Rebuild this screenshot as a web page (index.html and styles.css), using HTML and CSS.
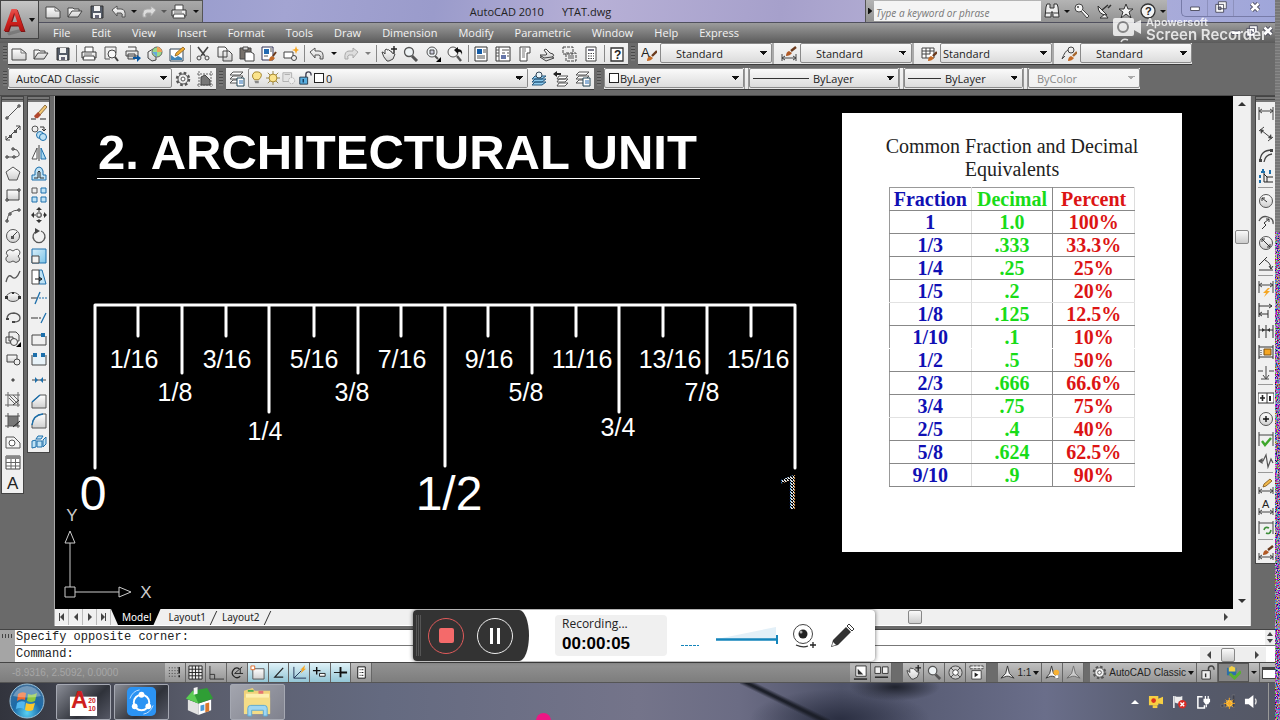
FILE: index.html
```html
<!DOCTYPE html>
<html lang="en">
<head>
<meta charset="UTF-8">
<meta name="viewport" content="width=device-width, initial-scale=1.0">
<title>AutoCAD 2010 - YTAT.dwg</title>
<link rel="stylesheet" href="styles.css">
</head>
<body>

<!-- Shared gradients -->
<svg class="gradients" aria-hidden="true">
  <defs>
    <linearGradient id="red" x1="0" y1="0" x2="0" y2="1"><stop offset="0" stop-color="#f0706c"/><stop offset=".5" stop-color="#d8231f"/><stop offset="1" stop-color="#8e0f0f"/></linearGradient>
    <linearGradient id="pale" x1="0" y1="0" x2="0" y2="1"><stop offset="0" stop-color="#fff"/><stop offset="1" stop-color="#cfcfcf"/></linearGradient>
    <linearGradient id="blue" x1="0" y1="0" x2="1" y2="1"><stop offset="0" stop-color="#d9f0fb"/><stop offset="1" stop-color="#7cc3e8"/></linearGradient>
    <radialGradient id="orb" cx=".5" cy=".85" r=".8"><stop offset="0" stop-color="#58d2f5"/><stop offset=".5" stop-color="#1b6aa8"/><stop offset="1" stop-color="#3c6f9c"/></radialGradient>
  </defs>
</svg>

<!-- Icon sprite -->
<svg class="sprite" aria-hidden="true">
  <!-- Files -->
  <symbol id="new" viewBox="0 0 16 16"><path d="M1 3h9l5 4v7H1z" fill="url(#pale)" stroke="#444"/><path d="M10 3v4h5" fill="none" stroke="#777"/></symbol>
  <symbol id="open" viewBox="0 0 16 16"><path d="M1 13V4h5l1 1h5v2M1 13l4-6h10l-4 6z" fill="url(#pale)" stroke="#444"/></symbol>
  <symbol id="save" viewBox="0 0 16 16"><path d="M2 2h12v12H2z" fill="#555c68" stroke="#333"/><path d="M5 2h6v5H5zM4 9h8v5H4z" fill="#f2f2f2"/><path d="M6 11h4v3H6z" fill="#667"/></symbol>
  <symbol id="undo" viewBox="0 0 16 16"><path d="M1 6l5-4v3h4q5 0 4 8h-3q1-4-1-4H6v3z" fill="url(#pale)" stroke="#555"/></symbol>
  <symbol id="redo" viewBox="0 0 16 16"><path d="M15 6l-5-4v3H6q-5 0-4 8h3q-1-4 1-4h4v3z" fill="#ddd" stroke="#aaa"/></symbol>
  <symbol id="print" viewBox="0 0 16 16"><path d="M4 1h8v6H4z" fill="#fff" stroke="#444"/><path d="M1 6h14v6H1z" fill="url(#pale)" stroke="#333"/><path d="M3 10h10l1 4H2z" fill="#fff" stroke="#444"/><path d="M3 8h8" stroke="#777"/></symbol>
  <symbol id="preview" viewBox="0 0 16 16"><path d="M2 1h11v6M2 1v12h5" fill="none" stroke="#555"/><circle cx="9" cy="8" r="4" fill="#f7f7f7" stroke="#444"/><path d="M12 11l3 4" stroke="#444" stroke-width="2"/></symbol>
  <symbol id="publish" viewBox="0 0 16 16"><path d="M3 1h8v4M1 5h12v5H1zM3 8h7v5H3z" fill="url(#pale)" stroke="#444"/><path d="M8 11h4V9l4 3-4 4v-3H8z" fill="#0a57a0"/></symbol>
  <symbol id="dwf" viewBox="0 0 16 16"><path d="M1 6l5-3 3 3v8l-4 1-4-3z" fill="url(#pale)" stroke="#444"/><circle cx="10" cy="6" r="5" fill="#9adb8a" stroke="#666"/><path d="M10 1a5 5 0 015 5h-5z" fill="#f0a25a"/><path d="M5 6h5v5" fill="#65a7df"/></symbol>
  <symbol id="markup" viewBox="0 0 16 16"><path d="M1 3h13v12H1z" fill="#fff" stroke="#345"/><path d="M2 9l4 3 3-2 4 2v2H2z" fill="#3d85b9"/><path d="M6 10l1-3 7-6 2 2-7 6z" fill="#f0ad31" stroke="#7a5015" stroke-width=".7"/></symbol>
  <!-- Edit -->
  <symbol id="cut" viewBox="0 0 16 16"><path d="M3 1l7 9M13 1L6 10" stroke="#444" stroke-width="1.6"/><circle cx="4" cy="12" r="2" fill="none" stroke="#444"/><circle cx="12" cy="12" r="2" fill="none" stroke="#444"/></symbol>
  <symbol id="copyclip" viewBox="0 0 16 16"><path d="M1 1h7l2 2v8H1zM6 5h6l3 3v7H6z" fill="url(#pale)" stroke="#444"/></symbol>
  <symbol id="paste" viewBox="0 0 16 16"><path d="M1 2h11v11H1z" fill="#77716b" stroke="#444"/><path d="M4 1h5v3H4z" fill="#ddd" stroke="#444"/><path d="M6 6h6l3 2v7H6z" fill="#fff" stroke="#444"/></symbol>
  <symbol id="match" viewBox="0 0 16 16"><path d="M1 1h11v13H1z" fill="#fff" stroke="#335"/><path d="M3 3h5v5H3z" fill="#246bb2"/><path d="M9 3h2M9 5h2M3 10h4" stroke="#555"/><path d="M8 15q0-4 3-5l3 2q-2 3-6 3z" fill="#c46a26"/><path d="M12 10l3-4" stroke="#6b3a1c" stroke-width="2"/></symbol>
  <symbol id="blockedit" viewBox="0 0 16 16"><path d="M1 6h9v6H1z" fill="#fff" stroke="#444"/><circle cx="11" cy="12" r="2.500" fill="#eee" stroke="#444"/><path d="M13 0l1 3 2 1-2 1-1 3-1-3-3-1 3-1z" fill="#f5a623"/></symbol>
  <!-- View -->
  <symbol id="pan" viewBox="0 0 16 16"><path d="M1 6q2 0 3 2V4q2-2 2 0 2-1 3 1 2 0 2 2l3 1-2 5-4 2H6Q2 11 1 6z" fill="url(#pale)" stroke="#444"/><path d="M13 0v7M10 3h6" stroke="#222" stroke-width="1.400"/></symbol>
  <symbol id="zoom" viewBox="0 0 16 16"><circle cx="6" cy="6" r="4.500" fill="#eef3f5" stroke="#555" stroke-width="1.300"/><path d="M9 10l5 5" stroke="#555" stroke-width="3"/></symbol>
  <symbol id="zoomwin" viewBox="0 0 16 16"><circle cx="7" cy="6" r="5" fill="#eef3f5" stroke="#555"/><path d="M5 4h4v4H5z" fill="#ccd" stroke="#444"/><path d="M10 10l3 3" stroke="#555" stroke-width="2"/><path d="M16 11v5h-5z"/></symbol>
  <symbol id="zoomprev" viewBox="0 0 16 16"><circle cx="6" cy="6" r="5" fill="#f4f4f4" stroke="#555"/><path d="M10 10l4 5" stroke="#555" stroke-width="2.400"/><path d="M7 4l4-3v2q5 0 4 6-1-4-4-3v2z" fill="#111"/></symbol>
  <!-- Palettes -->
  <symbol id="props" viewBox="0 0 16 16"><path d="M2 1h12v14H2z" fill="#fff" stroke="#333"/><path d="M4 3h5v5H4z" fill="#145ca7"/><path d="M10 4h3M10 6h3M4 10h8M4 12h8" stroke="#555"/></symbol>
  <symbol id="dcenter" viewBox="0 0 16 16"><path d="M1 1h14v14H1z" fill="#fff" stroke="#333"/><path d="M4 1v14M7 4h7M7 7h3M12 7h2M7 10h3M12 10h2M1 4h3M1 7h3M1 10h3" stroke="#555"/><path d="M6 9h5v4H6z" fill="#67a"/></symbol>
  <symbol id="tool" viewBox="0 0 16 16"><path d="M3 1h10v6h-3v8H3z" fill="#fff" stroke="#444"/><path d="M5 3h4M5 5h4M5 7h3M5 9h3M5 11h3" stroke="#777"/></symbol>
  <symbol id="sheet" viewBox="0 0 16 16"><path d="M1 11l6 4 8-3-5-3z" fill="#ddd" stroke="#444"/><path d="M1 9l4 3 8-1q3-1 1-3l-3-1-4-4-2 1 3 4-1 1z" fill="url(#pale)" stroke="#444"/></symbol>
  <symbol id="markset" viewBox="0 0 16 16"><path d="M2 1h10v7H2zM5 7h10v8H5z" fill="#eee" stroke="#444" stroke-dasharray="3 1"/><path d="M7 10h6M7 12h6" stroke="#555"/></symbol>
  <symbol id="calc" viewBox="0 0 16 16"><path d="M3 1h10v14H3z" fill="#fff" stroke="#444"/><path d="M5 3h6v2H5z" fill="#778"/><path d="M5 7.500h6M5 10h6M5 12.500h6" stroke="#444" stroke-dasharray="1.500 1"/></symbol>
  <symbol id="lock" viewBox="0 0 16 16"><path d="M9 7V4q0-3 3-3t3 4" fill="none" stroke="#445" stroke-width="1.600"/><path d="M2 7h9v8H2z" fill="#58aee0" stroke="#234"/><path d="M6 9v4" stroke="#135" stroke-width="1.500"/></symbol>
  <symbol id="lockgray" viewBox="0 0 16 16"><path d="M9 6V4q0-3 3-3t3 4" fill="none" stroke="#444" stroke-width="1.600"/><path d="M2 6h9v9H2z" fill="#eee" stroke="#333"/><path d="M6 9v4" stroke="#333" stroke-width="1.500"/></symbol>
  <symbol id="textstyle" viewBox="0 0 16 16"><path d="M6 15q0-4 3-5l3 2q-2 3-6 3z" fill="#c46a26"/><path d="M11 10l5-5" stroke="#6b3a1c" stroke-width="2.400"/><text x="0" y="11" font-size="13" font-family="Liberation Sans" fill="#222">A</text></symbol>
  <symbol id="dimstyle" viewBox="0 0 16 16"><path d="M1 8v7M15 8v7M1 12h14M4 10l-3 2 3 2M12 10l3 2-3 2" fill="none" stroke="#444"/><path d="M5 10q0-4 3-5l3 2q-2 3-6 3z" fill="#b15a26"/><path d="M10 5l5-4" stroke="#6b3a1c" stroke-width="2.400"/></symbol>
  <symbol id="tabstyle" viewBox="0 0 16 16"><path d="M1 2h12v10H1zM1 5h12M1 8h8M5 2v10M9 2v6" fill="#fff" stroke="#444"/><path d="M7 15q0-4 3-5l3 2q-2 3-6 3z" fill="#c46a26"/><path d="M12 10l4-4" stroke="#6b3a1c" stroke-width="2.400"/></symbol>
  <symbol id="leadstyle" viewBox="0 0 16 16"><circle cx="10" cy="4" r="3" fill="none" stroke="#444"/><path d="M7 4Q4 5 1 13l3-3" fill="none" stroke="#444"/><path d="M7 15q0-4 3-5l3 2q-2 3-6 3z" fill="#c46a26"/><path d="M12 10l4-4" stroke="#a8682f" stroke-width="2.400"/></symbol>
  <symbol id="gear" viewBox="0 0 16 16"><circle cx="8" cy="8" r="6" fill="none" stroke="#555" stroke-width="2.500" stroke-dasharray="2.600 2.100"/><circle cx="8" cy="8" r="5" fill="#eee" stroke="#555"/><circle cx="8" cy="8" r="2" fill="#fff" stroke="#555"/></symbol>
  <symbol id="wsset" viewBox="0 0 16 16"><path d="M2 0v16M0 3h16M14 0v16M0 14h16" stroke="#666" stroke-dasharray="2 1"/><path d="M4 14V6l4-2 5 5v5z" fill="#777" stroke="#444"/></symbol>
  <symbol id="layers" viewBox="0 0 16 16"><path d="M4 1h10l-3 3H1zM4 5h10l-3 3H1zM4 9h10l-3 3H1z" fill="#fff" stroke="#555"/><path d="M8 7h7v8H8z" fill="#fff" stroke="#245"/><path d="M10 10h4M10 12h4" stroke="#246bb2"/></symbol>
  <symbol id="laycur" viewBox="0 0 16 16"><path d="M4 5h11l-4 3H1zM4 8h11l-4 3H1zM4 11h11l-4 3H1z" fill="#8ecbee" stroke="#275a80"/><circle cx="8" cy="4" r="3" fill="#e9f5fb" stroke="#345"/></symbol>
  <symbol id="layprev" viewBox="0 0 16 16"><path d="M6 5h9l-3 3H4zM6 8h9l-3 3H4zM6 12h9l-3 3H4z" fill="#fff" stroke="#555"/><path d="M0 3l4-3v2h4v2H4v2z" fill="#222"/></symbol>
  <symbol id="bulb" viewBox="0 0 16 16"><path d="M5 10Q2 7 3 4q2-4 5-3 5 0 5 4 0 2-3 5z" fill="#fbe48c" stroke="#9a7a20"/><path d="M5 11h5v3H6z" fill="#888"/></symbol>
  <symbol id="sun" viewBox="0 0 16 16"><path d="M8 0v16M0 8h16M2 2l12 12M14 2L2 14" stroke="#8d7a3a"/><circle cx="8" cy="8" r="4.500" fill="#fbe48c" stroke="#9a7a20"/></symbol>
  <symbol id="vpfreeze" viewBox="0 0 16 16"><path d="M1 2h10v10H1zM3 4h6" fill="#e4e4e4" stroke="#aaa"/><circle cx="11" cy="11" r="3.500" fill="#eee" stroke="#aaa" stroke-dasharray="2 1"/></symbol>
  <!-- Draw -->
  <symbol id="line" viewBox="0 0 16 16"><path d="M2 14L14 2" stroke="#555"/><path d="M1 13h2v2H1zM13 1h2v2h-2z" fill="#fff" stroke="#333"/></symbol>
  <symbol id="xline" viewBox="0 0 16 16"><path d="M1 15L15 1M1 11v4h4M11 1h4v4" fill="none" stroke="#444"/><path d="M4 10h3v3H4zM9 5h3v3H9z" fill="#555"/></symbol>
  <symbol id="pline" viewBox="0 0 16 16"><path d="M2 12h8q5 0 4-4t-6-4" fill="none" stroke="#555"/><path d="M1 11h2v2H1zM7 3h2v2H7zM8 11h2v2H8z" fill="#fff" stroke="#333"/></symbol>
  <symbol id="polygon" viewBox="0 0 16 16"><path d="M8 1l7 5-3 8H4L1 6z" fill="url(#pale)" stroke="#555"/></symbol>
  <symbol id="rect" viewBox="0 0 16 16"><path d="M2 3h12v10H2z" fill="url(#pale)" stroke="#444"/><path d="M1 12h2v2H1zM13 2h2v2h-2z" fill="#fff" stroke="#333"/></symbol>
  <symbol id="arc" viewBox="0 0 16 16"><path d="M2 14Q3 3 14 3" fill="none" stroke="#555"/><path d="M1 13h2v2H1zM13 2h2v2h-2zM4 6h2v2H4z" fill="#fff" stroke="#333"/></symbol>
  <symbol id="circle" viewBox="0 0 16 16"><circle cx="8" cy="8" r="6.500" fill="url(#pale)" stroke="#555"/><path d="M7 9l5-5" stroke="#444"/><path d="M6 8h3v3H6z" fill="#555"/></symbol>
  <symbol id="revcloud" viewBox="0 0 16 16"><path d="M8 3q5-4 7 1 0 3-2 4 3 3 1 5-3 3-6 0-5 3-7-1-1-3 2-4-3-3-1-5 3-3 6 0z" fill="url(#pale)" stroke="#555"/></symbol>
  <symbol id="spline" viewBox="0 0 16 16"><path d="M1 13q2-9 6-5t8-6" fill="none" stroke="#555" stroke-width="1.300"/></symbol>
  <symbol id="ellipse" viewBox="0 0 16 16"><ellipse cx="8" cy="8" rx="6.500" ry="4.500" fill="url(#pale)" stroke="#555"/><path d="M0 7h3v3H0zM13 7h3v3h-3zM7 3h2v2H7z" fill="#333"/></symbol>
  <symbol id="ellarc" viewBox="0 0 16 16"><path d="M2 9q0-6 7-6 6 1 6 5t-6 4" fill="none" stroke="#555" stroke-width="1.300"/><path d="M1 8h3v2H1zM7 11h3v2H7z" fill="#444"/></symbol>
  <symbol id="insert" viewBox="0 0 16 16"><path d="M4 1h7l3 3v6H4zM1 6h7v6H1z" fill="#eee" stroke="#444"/><circle cx="9" cy="11" r="3.500" fill="#eee" stroke="#444"/><path d="M16 11v5h-5z"/></symbol>
  <symbol id="block" viewBox="0 0 16 16"><path d="M2 4h10v7H2z" fill="url(#pale)" stroke="#444"/><circle cx="12" cy="11" r="3" fill="#eee" stroke="#444"/></symbol>
  <symbol id="point" viewBox="0 0 16 16"><path d="M7 7h2v2H7z" fill="#777" stroke="#444"/></symbol>
  <symbol id="hatch" viewBox="0 0 16 16"><path d="M3 0v15M0 3h15M13 0v15M0 13h15M4 6l6 6M4 3l9 9M8 3l5 5" stroke="#666"/><path d="M8 13l6-5" stroke="#333"/></symbol>
  <symbol id="gradient" viewBox="0 0 16 16"><path d="M3 3h10v10H3z" fill="#777"/><path d="M3 0v15M0 3h15M13 0v15M0 13h15" stroke="#555"/><path d="M8 14l7-6" stroke="#222"/></symbol>
  <symbol id="region" viewBox="0 0 16 16"><path d="M1 3h8l6 6v5H1z" fill="#f5f5f5" stroke="#555"/><circle cx="7" cy="9" r="3" fill="#fff" stroke="#555"/></symbol>
  <symbol id="table" viewBox="0 0 16 16"><path d="M1 2h14v13H1z" fill="#fff" stroke="#444"/><path d="M1 2h14v3H1z" fill="#888"/><path d="M1 8.500h14M1 12h14M6 5v10M10.500 5v10" stroke="#666"/></symbol>
  <symbol id="mtext" viewBox="0 0 16 16"><text x="2" y="14" font-size="17" font-family="Liberation Sans" fill="#222">A</text></symbol>
  <!-- Modify -->
  <symbol id="erase" viewBox="0 0 16 16"><path d="M0 15h5M9 15h6" stroke="#222"/><path d="M7 9l7-8 2 2-7 8z" fill="#f1c674" stroke="#74552b" stroke-width=".8"/><path d="M3 12l4-4 3 3-3 3q-3 1-4-2z" fill="#b1482e"/></symbol>
  <symbol id="copy" viewBox="0 0 16 16"><circle cx="4" cy="4" r="3" fill="#eee" stroke="#555"/><circle cx="9" cy="10" r="3.500" fill="#bfe2f5" stroke="#1c6fab"/><circle cx="12" cy="12" r="3.500" fill="#bfe2f5" stroke="#1c6fab"/><path d="M9 2h4v3M11 4l2 2 2-2" fill="none" stroke="#333"/></symbol>
  <symbol id="mirror" viewBox="0 0 16 16"><path d="M6 3v11H1z" fill="#fff" stroke="#555"/><path d="M10 3v11h5z" fill="#a9d8f1" stroke="#1c6fab"/><path d="M8 0v16" stroke="#444"/></symbol>
  <symbol id="offset" viewBox="0 0 16 16"><path d="M1 14V9h3V5q1-4 4-4t4 4v4h3v5z" fill="#bfe2f5" stroke="#1c6fab"/><path d="M3 12h4V6q1-2 2 0v6h4" fill="none" stroke="#333"/></symbol>
  <symbol id="array" viewBox="0 0 16 16"><path d="M1 1h5v5H1z" fill="#eee" stroke="#555"/><path d="M10 1h5v5h-5zM1 10h5v5H1zM10 10h5v5h-5z" fill="#bfe2f5" stroke="#1c6fab"/></symbol>
  <symbol id="move" viewBox="0 0 16 16"><path d="M8 0l3 3H5zM8 16l3-3H5zM0 8l3-3v6zM16 8l-3-3v6z" fill="#333"/><path d="M8 3v10M3 8h10" stroke="#333" stroke-dasharray="2 1"/><path d="M6 6h4v4H6z" fill="#eee" stroke="#444"/></symbol>
  <symbol id="rotate" viewBox="0 0 16 16"><path d="M6 3a6 6 0 104 0" fill="none" stroke="#555" stroke-width="1.300"/><path d="M4 0l5 3-5 3z" fill="#444"/></symbol>
  <symbol id="scale" viewBox="0 0 16 16"><path d="M1 1h14v14H1z" fill="url(#blue)" stroke="#1c6fab"/><path d="M1 8h7v7H1z" fill="#f2f2f2" stroke="#444"/></symbol>
  <symbol id="stretch" viewBox="0 0 16 16"><path d="M8 1h3l4 14H8z" fill="#bfe2f5" stroke="#1c6fab"/><path d="M1 1h7v14H1z" fill="#fff" stroke="#444"/><path d="M4 10h6M8 8l3 2-3 2" fill="none" stroke="#111"/></symbol>
  <symbol id="trim" viewBox="0 0 16 16"><path d="M0 8h6" stroke="#333"/><path d="M4 14L9 2" stroke="#1c6fab" stroke-width="1.300"/><path d="M8 8h8" stroke="#1c6fab" stroke-dasharray="2 1"/></symbol>
  <symbol id="extend" viewBox="0 0 16 16"><path d="M0 8h5" stroke="#333"/><path d="M5 8h6" stroke="#333" stroke-dasharray="2 1"/><path d="M10 13l5-10" stroke="#1c6fab" stroke-width="1.300"/></symbol>
  <symbol id="breakpt" viewBox="0 0 16 16"><path d="M1 14V4h10M15 5v9H1" fill="none" stroke="#444"/><path d="M10 2h4v4h-4z" fill="#1c6fab"/></symbol>
  <symbol id="break" viewBox="0 0 16 16"><path d="M1 4v10h14V4" fill="#e8f3f9" stroke="#444"/><path d="M2 2h4v4H2zM10 2h4v4h-4z" fill="#1c6fab"/></symbol>
  <symbol id="join" viewBox="0 0 16 16"><path d="M1 8h14" stroke="#444"/><path d="M4 5l3 3-3 3zM12 5L9 8l3 3z" fill="#1c6fab"/></symbol>
  <symbol id="chamfer" viewBox="0 0 16 16"><path d="M1 15V9l8-7h6v13z" fill="url(#pale)" stroke="#555"/><path d="M1 9l8-7" stroke="#1c6fab" stroke-width="1.400"/></symbol>
  <symbol id="fillet" viewBox="0 0 16 16"><path d="M1 15v-3Q2 2 12 1h3v14z" fill="url(#pale)" stroke="#555"/><path d="M1 12Q2 2 12 1" fill="none" stroke="#1c6fab" stroke-width="1.400"/></symbol>
  <symbol id="explode" viewBox="0 0 16 16"><path d="M5 5l2-3h5l-2 3zM1 7l4-1v7l-4 1zM6 7h5v6H6zM12 6l3-3v7l-3 3z" fill="#bfe2f5" stroke="#1c6fab"/></symbol>
  <!-- Dimension -->
  <symbol id="dimlin" viewBox="0 0 16 16"><path d="M1 2v13M15 2v13M1 6h14M4 4L1 6l3 2M12 4l3 2-3 2" fill="none" stroke="#444"/></symbol>
  <symbol id="dimali" viewBox="0 0 16 16"><path d="M1 5l5-4M10 15l5-4M3 4l10 8" fill="none" stroke="#444"/><path d="M2 3l4 1-3 4zM14 13l-4-1 3-4z" fill="#444"/></symbol>
  <symbol id="dimarc" viewBox="0 0 16 16"><path d="M2 15Q2 3 14 3M6 15Q7 8 14 7" fill="none" stroke="#444" stroke-width="1.300"/><path d="M1 12h3v3H1zM12 2h3v3h-3z" fill="#444"/></symbol>
  <symbol id="dimord" viewBox="0 0 16 16"><path d="M6 4v10h9M6 6l3 3h6M9 9v5" fill="none" stroke="#222"/><path d="M5 1v4M12 2v4M2 7v3M2 12v3M3 4h4" stroke="#1c6fab" stroke-width="2"/></symbol>
  <symbol id="dimrad" viewBox="0 0 16 16"><circle cx="8" cy="8" r="6.500" fill="url(#pale)" stroke="#555"/><path d="M9 9L4 5M4 8V5h3" fill="none" stroke="#333"/></symbol>
  <symbol id="dimjog" viewBox="0 0 16 16"><path d="M1 7Q4 1 10 3t5 7" fill="none" stroke="#555" stroke-width="1.300"/><path d="M4 15l4-4-2-2 5-4M11 8V5H8" fill="none" stroke="#333"/></symbol>
  <symbol id="dimdia" viewBox="0 0 16 16"><circle cx="8" cy="8" r="6.500" fill="url(#pale)" stroke="#555"/><path d="M4 4l8 8M4 7V4h3M12 9v3H9" fill="none" stroke="#333"/></symbol>
  <symbol id="dimang" viewBox="0 0 16 16"><path d="M1 14h14M1 9l8-8" stroke="#333"/><path d="M7 4q6 3 6 9M11 10l2 3 2-3" fill="none" stroke="#333"/></symbol>
  <symbol id="dimquick" viewBox="0 0 16 16"><path d="M1 0v12M15 0v12M1 4h14M4 2L1 4l3 2M12 2l3 2-3 2" fill="none" stroke="#444"/><path d="M10 7l-5 5h3l-2 4 6-6H9l3-3z" fill="#f5a623"/></symbol>
  <symbol id="dimbase" viewBox="0 0 16 16"><path d="M1 1v14M1 4h13M11 2l3 2-3 2M10 8v8M1 12h9M4 10l-3 2 3 2" fill="none" stroke="#333"/></symbol>
  <symbol id="dimcont" viewBox="0 0 16 16"><path d="M1 2v13M8 2v13M15 2v13M1 7h14" fill="none" stroke="#333"/><path d="M7 7L4 5v4zM9 7l3-2v4z" fill="#333"/></symbol>
  <symbol id="dimspace" viewBox="0 0 16 16"><path d="M1 1v14M15 1v14M1 3h14M1 13h14" stroke="#333"/><path d="M6 5h7v6H6z" fill="#f5a623" stroke="#7a5015"/><path d="M3 6v5" stroke="#333" stroke-dasharray="1 1"/></symbol>
  <symbol id="dimbreak" viewBox="0 0 16 16"><path d="M0 6h5M11 6h5M8 1v12M3 14h8M5 10l3 4 3-4" fill="none" stroke="#444"/></symbol>
  <symbol id="tolerance" viewBox="0 0 16 16"><path d="M0 3h16v10H0zM9 3v10" fill="#fff" stroke="#333"/><path d="M2 8h5M4.500 5v6" stroke="#222" stroke-width="1.600"/><path d="M12 6v5" stroke="#222" stroke-width="2"/></symbol>
  <symbol id="center" viewBox="0 0 16 16"><circle cx="8" cy="8" r="6.500" fill="url(#pale)" stroke="#555"/><path d="M8 5v6M5 8h6" stroke="#111" stroke-width="1.400"/></symbol>
  <symbol id="inspect" viewBox="0 0 16 16"><path d="M1 0v14M15 0v14M1 3h14" fill="none" stroke="#444"/><path d="M4 9l3 4 6-7" fill="none" stroke="#3da62b" stroke-width="2.400"/></symbol>
  <symbol id="jogline" viewBox="0 0 16 16"><path d="M1 8h4l3-6 2 12 3-8 2 4M1 8l3-2v4z" fill="none" stroke="#555" stroke-width="1.200"/></symbol>
  <symbol id="dimedit" viewBox="0 0 16 16"><path d="M1 9v7M15 9v7M1 13h14M4 11l-3 2 3 2M12 11l3 2-3 2" fill="none" stroke="#444"/><path d="M5 9l1-3 6-5 2 2-6 5z" fill="#f1b84a" stroke="#7a5015" stroke-width=".8"/></symbol>
  <symbol id="dimtedit" viewBox="0 0 16 16"><path d="M1 9v7M15 9v7M1 13h14M4 11l-3 2 3 2M12 11l3 2-3 2" fill="none" stroke="#444"/><text x="4" y="9" font-size="11" font-family="Liberation Sans" fill="#222">A</text></symbol>
  <symbol id="dimupd" viewBox="0 0 16 16"><path d="M1 1v13M15 1v13M1 3h14" fill="none" stroke="#444"/><path d="M6 10q1-4 5-2M13 10q-1 5-5 3" fill="none" stroke="#3f8f3a" stroke-width="1.600"/></symbol>
  <!-- Info center -->
  <symbol id="find" viewBox="0 0 16 16"><path d="M2 4l1-3h3v4h4V1h3l1 3 1 10H9V9H7v5H1z" fill="#eee" stroke="#333"/><path d="M1 10h5M10 10h5" stroke="#333"/></symbol>
  <symbol id="key" viewBox="0 0 16 16"><circle cx="5" cy="5" r="4" fill="#f4f4f4" stroke="#444"/><path d="M7 8l6 7 2-2-6-6" fill="#f4f4f4" stroke="#444"/><circle cx="4" cy="4" r="1" fill="#444"/></symbol>
  <symbol id="dish" viewBox="0 0 16 16"><path d="M4 15h8l-3-4z" fill="#eee" stroke="#333"/><path d="M2 3q0 9 9 9z" fill="#f4f4f4" stroke="#333"/><path d="M6 7l6-5M12 5l3-3" stroke="#333" stroke-width="1.500"/></symbol>
  <symbol id="star" viewBox="0 0 16 16"><path d="M8 1l2 5h5l-4 3 2 6-5-4-5 4 2-6-4-3h5z" fill="#f4f4f4" stroke="#333"/></symbol>
  <symbol id="help" viewBox="0 0 16 16"><circle cx="8" cy="8" r="7" fill="#f4f4f4" stroke="#333" stroke-width="1.300"/><text x="5" y="12" font-size="11" font-weight="bold" font-family="Liberation Sans" fill="#222">?</text></symbol>
  <symbol id="helpbox" viewBox="0 0 16 16"><path d="M2 2h12v13H2z" fill="#fff" stroke="#333" stroke-width="1.300"/><text x="5" y="13" font-size="12" font-weight="bold" font-family="Liberation Sans" fill="#222">?</text></symbol>
  <symbol id="restore" viewBox="0 0 16 16"><path d="M5 2h9v8H5zM2 5h9v9H2z" fill="#fff" stroke="#445"/><path d="M5 8h3v3H5z" fill="#889" stroke="#445"/></symbol>
  <symbol id="close" viewBox="0 0 16 16"><path d="M4 4l8 8M12 4l-8 8" stroke="#445" stroke-width="5"/><path d="M4 4l8 8M12 4l-8 8" stroke="#fff" stroke-width="3"/></symbol>
  <symbol id="minus" viewBox="0 0 16 16"><path d="M3 8h10v4H3z" fill="#fff" stroke="#445"/></symbol>
  <!-- Status bar -->
  <symbol id="snap" viewBox="0 0 16 16"><path d="M2 3h10M2 6h10M2 9h10M2 12h8" stroke="#333" stroke-dasharray="1 2"/><path d="M13 2v7M13 11v2" stroke="#111" stroke-width="1.500"/></symbol>
  <symbol id="grid" viewBox="0 0 16 16"><path d="M1 1h14v14H1z" fill="#eee" stroke="#222"/><path d="M4.500 1v14M8 1v14M11.500 1v14M1 4.500h14M1 8h14M1 11.500h14" stroke="#222"/></symbol>
  <symbol id="ortho" viewBox="0 0 16 16"><path d="M1 1v14h15M1 10h5v5" fill="none" stroke="#333"/></symbol>
  <symbol id="polar" viewBox="0 0 16 16"><path d="M11 4a5 5 0 101 8" fill="none" stroke="#222" stroke-width="1.300"/><path d="M6 9h9M6 9l8-7M12 4v5" fill="none" stroke="#222"/></symbol>
  <symbol id="osnap" viewBox="0 0 16 16"><path d="M3 4h12v11H3z" fill="url(#pale)" stroke="#555"/><path d="M1 1h4v4H1z" fill="#fff" stroke="#e26e2c"/></symbol>
  <symbol id="otrack" viewBox="0 0 16 16"><path d="M13 3L4 13h9" fill="none" stroke="#222" stroke-width="1.300"/></symbol>
  <symbol id="ducs" viewBox="0 0 16 16"><path d="M2 2v12h13M2 14l8-8" fill="none" stroke="#235"/><path d="M14 0l-5 5h2l-2 4 6-5h-2z" fill="#f5a623"/></symbol>
  <symbol id="dyn" viewBox="0 0 16 16"><path d="M5 2v8M1 6h8" stroke="#111" stroke-width="1.500"/><path d="M8 9h6v3H8z" fill="#fff" stroke="#222"/></symbol>
  <symbol id="lwt" viewBox="0 0 16 16"><path d="M1 8h7" stroke="#111"/><path d="M8 2v11M8 8h7" stroke="#111" stroke-width="2"/></symbol>
  <symbol id="qp" viewBox="0 0 16 16"><path d="M4 2h8v12H4z" fill="#fff" stroke="#111"/><path d="M6 5h4M6 8h4M6 11h4" stroke="#111" stroke-dasharray="1 1 2"/></symbol>
  <symbol id="modelsp" viewBox="0 0 16 16"><path d="M3 1h11v11H3z" fill="#fff" stroke="#333"/><path d="M5 4v6h6z" fill="#333"/><path d="M1 15h14" stroke="#222" stroke-width="1.500"/></symbol>
  <symbol id="layoutsp" viewBox="0 0 16 16"><path d="M1 2h6v7H1zM9 2h6v7H9z" fill="#eee" stroke="#333"/><path d="M1 13h14" stroke="#222" stroke-width="1.500"/></symbol>
  <symbol id="wheel" viewBox="0 0 16 16"><circle cx="8" cy="8" r="7" fill="#ccc" stroke="#444"/><circle cx="8" cy="8" r="3" fill="#fff" stroke="#444"/><path d="M3 3l3 3M13 3l-3 3M3 13l3-3M13 13l-3-3" stroke="#444"/></symbol>
  <symbol id="motion" viewBox="0 0 16 16"><path d="M1 1h14v3H1z" fill="#eee" stroke="#444" stroke-dasharray="3 1"/><path d="M3 6h10v9H3z" fill="#fff" stroke="#444"/><path d="M6 8l4 2.500L6 13z" fill="#222"/></symbol>
  <symbol id="anno" viewBox="0 0 16 16"><path d="M8 1l2 8 5 5-6-2H7l-6 2 5-5z" fill="#f4f4f4" stroke="#333"/></symbol>
  <symbol id="annovis" viewBox="0 0 16 16"><path d="M7 1l2 8 5 5-6-2H6l-5 2 4-5z" fill="#f4f4f4" stroke="#333"/><circle cx="12" cy="8" r="3" fill="#f9b233"/><path d="M11 11h3v3h-3z" fill="#fff"/></symbol>
  <symbol id="tray" viewBox="0 0 16 16"><path d="M1 3h10v8H1z" fill="#2d6ea8"/><path d="M3 3l3-2 4 2v4H3z" fill="#f2d046"/><path d="M4 9l5 5 7-7" fill="none" stroke="#58b030" stroke-width="3"/></symbol>
  <!-- System tray -->
  <symbol id="cam" viewBox="0 0 16 16"><path d="M1 2h10v3l5-2v8l-5-1v2H1z" fill="#f6cf43"/><path d="M5 12h5v3H5z" fill="#f6cf43"/><circle cx="6" cy="7" r="2.500" fill="#d9331f"/></symbol>
  <symbol id="flag" viewBox="0 0 16 16"><path d="M2 2v13" stroke="#fff" stroke-width="1.500"/><path d="M3 2q4 2 8 0v7q-4 2-8 0z" fill="#eee"/><circle cx="11" cy="11" r="4.500" fill="#d92b25"/><path d="M9 9l4 4M13 9l-4 4" stroke="#fff" stroke-width="1.500"/></symbol>
  <symbol id="power" viewBox="0 0 16 16"><path d="M7 3H2v12h7v-3" fill="none" stroke="#fff" stroke-width="1.600"/><path d="M8 5h7v3l-2 3h-3L8 8z" fill="#fff"/><path d="M10 2v4M13 2v4M11 11v3" stroke="#fff" stroke-width="1.300"/></symbol>
  <symbol id="signal" viewBox="0 0 16 16"><path d="M1 14h3v-3H1zM5 14h3V8H5zM9 14h3V5H9zM13 14h3V1h-3z" fill="#3f4250" stroke="#888" stroke-width=".5"/><circle cx="10" cy="10" r="3.500" fill="#ffc84a"/><path d="M10 4v12M4 10h12M6 6l8 8M14 6l-8 8" stroke="#f5a623"/></symbol>
  <symbol id="sound" viewBox="0 0 16 16"><path d="M1 5h4l5-4v14l-5-4H1z" fill="#fff"/><path d="M12 5q2 3 0 6" fill="none" stroke="#ddd" stroke-width="1.300"/></symbol>
</svg>

<div class="desktop">
<div class="app">

  <!-- Title bar and menu -->
  <header class="header">
    <button class="app-button" aria-label="Application menu">
      <svg class="app-logo" viewBox="0 0 28 34" aria-hidden="true"><path d="M6 30l15-4 2 3-15 4z" fill="#3334"/><text x="2" y="28" class="logo-a">A</text></svg>
      <span class="caret"></span>
    </button>
    <div class="titlebar">
      <div class="quick-access">
        <button class="tb" aria-label="New"><svg><use href="#new"/></svg></button>
        <button class="tb" aria-label="Open"><svg><use href="#open"/></svg></button>
        <button class="tb" aria-label="Save"><svg><use href="#save"/></svg></button>
        <button class="tb" aria-label="Undo"><svg><use href="#undo"/></svg></button>
        <button class="drop narrow" aria-label="Undo list"><span class="caret"></span></button>
        <button class="tb" aria-label="Redo"><svg><use href="#redo"/></svg></button>
        <button class="drop narrow faded" aria-label="Redo list"><span class="caret"></span></button>
        <button class="tb" aria-label="Plot"><svg><use href="#print"/></svg></button>
        <button class="drop" aria-label="Customize"><span class="caret"></span></button>
      </div>
      <p class="title"><span>AutoCAD 2010</span><span>YTAT.dwg</span></p>
      <div class="info-center">
        <button class="expand" aria-label="Collapse"></button>
        <input class="search" type="text" placeholder="Type a keyword or phrase" aria-label="Search">
        <button class="tb" aria-label="Search"><svg><use href="#find"/></svg></button>
        <button class="drop narrow" aria-label="Search options"><span class="caret"></span></button>
        <button class="tb" aria-label="Subscription"><svg><use href="#key"/></svg></button>
        <button class="tb" aria-label="Communication"><svg><use href="#dish"/></svg></button>
        <button class="tb" aria-label="Favorites"><svg><use href="#star"/></svg></button>
        <button class="tb" aria-label="Help"><svg><use href="#help"/></svg></button>
        <button class="drop narrow" aria-label="Help options"><span class="caret"></span></button>
      </div>
      <div class="window-buttons">
        <button aria-label="Minimize"><svg><use href="#minus"/></svg></button>
        <button aria-label="Restore"><svg><use href="#restore"/></svg></button>
        <button class="wide" aria-label="Close"><svg><use href="#close"/></svg></button>
      </div>
    </div>
    <nav class="menu">
      <a href="#">File</a><a href="#">Edit</a><a href="#">View</a><a href="#">Insert</a><a href="#">Format</a><a href="#">Tools</a><a href="#">Draw</a><a href="#">Dimension</a><a href="#">Modify</a><a href="#">Parametric</a><a href="#">Window</a><a href="#">Help</a><a href="#">Express</a>
      <div class="doc-buttons">
        <button aria-label="Minimize drawing"><svg><use href="#minus"/></svg></button>
        <button aria-label="Restore drawing"><svg><use href="#restore"/></svg></button>
        <button aria-label="Close drawing"><svg><use href="#close"/></svg></button>
      </div>
    </nav>
  </header>

  <!-- Toolbars -->
  <div class="toolbars">
    <div class="bar">
      <span class="grip"></span>
      <div class="panel">
        <button class="tb" aria-label="New"><svg><use href="#new"/></svg></button>
        <button class="tb" aria-label="Open"><svg><use href="#open"/></svg></button>
        <button class="tb" aria-label="Save"><svg><use href="#save"/></svg></button>
        <span class="sep"></span>
        <button class="tb" aria-label="Plot"><svg><use href="#print"/></svg></button>
        <button class="tb" aria-label="Plot preview"><svg><use href="#preview"/></svg></button>
        <button class="tb" aria-label="Publish"><svg><use href="#publish"/></svg></button>
        <button class="tb" aria-label="3D DWF"><svg><use href="#dwf"/></svg></button>
        <button class="tb" aria-label="Markup"><svg><use href="#markup"/></svg></button>
        <span class="sep"></span>
        <button class="tb" aria-label="Cut"><svg><use href="#cut"/></svg></button>
        <button class="tb" aria-label="Copy"><svg><use href="#copyclip"/></svg></button>
        <button class="tb" aria-label="Paste"><svg><use href="#paste"/></svg></button>
        <button class="tb" aria-label="Match properties"><svg><use href="#match"/></svg></button>
        <button class="tb" aria-label="Block editor"><svg><use href="#blockedit"/></svg></button>
        <span class="sep"></span>
        <button class="tb" aria-label="Undo"><svg><use href="#undo"/></svg></button>
        <button class="drop" aria-label="Undo list"><span class="caret"></span></button>
        <button class="tb" aria-label="Redo"><svg><use href="#redo"/></svg></button>
        <button class="drop faded" aria-label="Redo list"><span class="caret"></span></button>
        <span class="sep"></span>
        <button class="tb" aria-label="Pan"><svg><use href="#pan"/></svg></button>
        <button class="tb" aria-label="Zoom"><svg><use href="#zoom"/></svg></button>
        <button class="tb" aria-label="Zoom window"><svg><use href="#zoomwin"/></svg></button>
        <button class="tb" aria-label="Zoom previous"><svg><use href="#zoomprev"/></svg></button>
        <span class="sep"></span>
        <button class="tb" aria-label="Properties"><svg><use href="#props"/></svg></button>
        <button class="tb" aria-label="DesignCenter"><svg><use href="#dcenter"/></svg></button>
        <button class="tb" aria-label="Tool palettes"><svg><use href="#tool"/></svg></button>
        <button class="tb" aria-label="Sheet set"><svg><use href="#sheet"/></svg></button>
        <button class="tb" aria-label="Markup set"><svg><use href="#markset"/></svg></button>
        <button class="tb" aria-label="QuickCalc"><svg><use href="#calc"/></svg></button>
        <span class="sep"></span>
        <button class="tb" aria-label="Help"><svg><use href="#helpbox"/></svg></button>
      </div>
      <span class="grip wide"></span>
      <div class="panel">
        <button class="tb" aria-label="Text style"><svg><use href="#textstyle"/></svg></button>
        <select class="combo style" aria-label="Text style"><option>Standard</option></select>
        <button class="tb split" aria-label="Dimension style"><svg><use href="#dimstyle"/></svg></button>
        <select class="combo style" aria-label="Dimension style"><option>Standard</option></select>
        <button class="tb split" aria-label="Table style"><svg><use href="#tabstyle"/></svg></button>
        <select class="combo style flush" aria-label="Table style"><option>Standard</option></select>
        <button class="tb split" aria-label="Multileader style"><svg><use href="#leadstyle"/></svg></button>
        <select class="combo style" aria-label="Multileader style"><option>Standard</option></select>
      </div>
    </div>

    <div class="bar">
      <span class="grip"></span>
      <div class="panel">
        <select class="combo workspace-select" aria-label="Workspace"><option>AutoCAD Classic</option></select>
        <button class="tb" aria-label="Workspace settings"><svg><use href="#gear"/></svg></button>
        <button class="tb" aria-label="My workspace"><svg><use href="#wsset"/></svg></button>
      </div>
      <span class="grip wide"></span>
      <div class="panel">
        <button class="tb" aria-label="Layer properties"><svg><use href="#layers"/></svg></button>
        <div class="combo layer">
          <svg><use href="#bulb"/></svg><svg><use href="#sun"/></svg><svg><use href="#vpfreeze"/></svg><svg><use href="#lock"/></svg><span class="swatch"></span>
          <select aria-label="Layer"><option>0</option></select>
        </div>
        <button class="tb" aria-label="Make current"><svg><use href="#laycur"/></svg></button>
        <button class="tb" aria-label="Layer previous"><svg><use href="#layprev"/></svg></button>
        <button class="tb" aria-label="Layer states"><svg><use href="#layers"/></svg></button>
      </div>
      <span class="grip wide"></span>
      <div class="panel">
        <div class="combo color"><span class="swatch"></span><select aria-label="Color"><option>ByLayer</option></select></div>
        <span class="double"></span>
        <div class="combo linetype"><span class="rule"></span><select aria-label="Linetype"><option>ByLayer</option></select></div>
        <span class="double"></span>
        <div class="combo lineweight"><span class="rule"></span><select aria-label="Lineweight"><option>ByLayer</option></select></div>
        <span class="double"></span>
        <select class="combo plot" aria-label="Plot style" disabled><option>ByColor</option></select>
      </div>
    </div>
  </div>

  <!-- Work area -->
  <main class="work">
    <div class="dock">
      <div class="tools draw">
        <span class="dock-grip"></span>
        <button aria-label="Line"><svg><use href="#line"/></svg></button>
        <button aria-label="Construction line"><svg><use href="#xline"/></svg></button>
        <button aria-label="Polyline"><svg><use href="#pline"/></svg></button>
        <button aria-label="Polygon"><svg><use href="#polygon"/></svg></button>
        <button aria-label="Rectangle"><svg><use href="#rect"/></svg></button>
        <button aria-label="Arc"><svg><use href="#arc"/></svg></button>
        <button aria-label="Circle"><svg><use href="#circle"/></svg></button>
        <button aria-label="Revision cloud"><svg><use href="#revcloud"/></svg></button>
        <button aria-label="Spline"><svg><use href="#spline"/></svg></button>
        <button aria-label="Ellipse"><svg><use href="#ellipse"/></svg></button>
        <button aria-label="Ellipse arc"><svg><use href="#ellarc"/></svg></button>
        <button aria-label="Insert block"><svg><use href="#insert"/></svg></button>
        <button aria-label="Make block"><svg><use href="#block"/></svg></button>
        <button aria-label="Point"><svg><use href="#point"/></svg></button>
        <button aria-label="Hatch"><svg><use href="#hatch"/></svg></button>
        <button aria-label="Gradient"><svg><use href="#gradient"/></svg></button>
        <button aria-label="Region"><svg><use href="#region"/></svg></button>
        <button aria-label="Table"><svg><use href="#table"/></svg></button>
        <button aria-label="Multiline text"><svg><use href="#mtext"/></svg></button>
      </div>
      <div class="tools modify">
        <span class="dock-grip"></span>
        <button aria-label="Erase"><svg><use href="#erase"/></svg></button>
        <button aria-label="Copy"><svg><use href="#copy"/></svg></button>
        <button aria-label="Mirror"><svg><use href="#mirror"/></svg></button>
        <button aria-label="Offset"><svg><use href="#offset"/></svg></button>
        <button aria-label="Array"><svg><use href="#array"/></svg></button>
        <button aria-label="Move"><svg><use href="#move"/></svg></button>
        <button aria-label="Rotate"><svg><use href="#rotate"/></svg></button>
        <button aria-label="Scale"><svg><use href="#scale"/></svg></button>
        <button aria-label="Stretch"><svg><use href="#stretch"/></svg></button>
        <button aria-label="Trim"><svg><use href="#trim"/></svg></button>
        <button aria-label="Extend"><svg><use href="#extend"/></svg></button>
        <button aria-label="Break at point"><svg><use href="#breakpt"/></svg></button>
        <button aria-label="Break"><svg><use href="#break"/></svg></button>
        <button aria-label="Join"><svg><use href="#join"/></svg></button>
        <button aria-label="Chamfer"><svg><use href="#chamfer"/></svg></button>
        <button aria-label="Fillet"><svg><use href="#fillet"/></svg></button>
        <button aria-label="Explode"><svg><use href="#explode"/></svg></button>
      </div>
    </div>

    <div class="drawing-window">
      <div class="view">
        <div class="canvas">
          <h1 class="heading">2. ARCHITECTURAL UNIT</h1>
          <svg class="ruler" viewBox="0 0 780 512" role="img" aria-label="One inch divided into sixteenths">
            <defs><pattern id="picked" width="3" height="3" patternUnits="userSpaceOnUse"><path d="M0 0h2v1H0zM1 1h2v1H1zM0 2h1v1H0z" fill="#e4e4e4"/></pattern></defs>
            <path class="ticks" d="M40 372V209H740V372M83 209v31M127 209v68M171 209v31M214 209v107M259 209v31M303 209v68M346 209v31M390 209v161M433 209v31M477 209v68M521 209v31M564 209v107M608 209v31M652 209v68M696 209v31"/>
            <g class="small">
              <text x="79" y="272">1/16</text><text x="172" y="272">3/16</text><text x="259" y="272">5/16</text><text x="347" y="272">7/16</text><text x="434" y="272">9/16</text><text x="527" y="272">11/16</text><text x="615" y="272">13/16</text><text x="703" y="272">15/16</text>
              <text x="120" y="305">1/8</text><text x="297" y="305">3/8</text><text x="471" y="305">5/8</text><text x="647" y="305">7/8</text>
              <text x="210" y="344">1/4</text><text x="563" y="340">3/4</text>
            </g>
            <g class="large"><text x="38" y="414">0</text><text x="394" y="414">1/2</text><text class="picked" x="736" y="413">1</text></g>
            <g class="ucs">
              <path d="M10 491h10v10H10zM15 491V447M20 496H64M15 435l-5 12h10zM76 496l-12-5v10z"/>
              <text x="17" y="425">Y</text><text x="91" y="502">X</text>
            </g>
          </svg>
          <section class="sheet">
            <h2>Common Fraction and Decimal Equivalents</h2>
            <table>
              <thead><tr><th>Fraction</th><th>Decimal</th><th>Percent</th></tr></thead>
              <tbody>
                <tr><td>1</td><td>1.0</td><td>100%</td></tr>
                <tr><td>1/3</td><td>.333</td><td>33.3%</td></tr>
                <tr><td>1/4</td><td>.25</td><td>25%</td></tr>
                <tr class="faint"><td>1/5</td><td>.2</td><td>20%</td></tr>
                <tr><td>1/8</td><td>.125</td><td>12.5%</td></tr>
                <tr class="no-line"><td>1/10</td><td>.1</td><td>10%</td></tr>
                <tr><td>1/2</td><td>.5</td><td>50%</td></tr>
                <tr><td>2/3</td><td>.666</td><td>66.6%</td></tr>
                <tr class="faint"><td>3/4</td><td>.75</td><td>75%</td></tr>
                <tr><td>2/5</td><td>.4</td><td>40%</td></tr>
                <tr><td>5/8</td><td>.624</td><td>62.5%</td></tr>
                <tr><td>9/10</td><td>.9</td><td>90%</td></tr>
              </tbody>
            </table>
          </section>
        </div>
        <div class="scroll-v"><span class="arrow up"></span><span class="thumb"></span><span class="arrow down"></span></div>
      </div>
      <div class="tabs">
        <button class="page" aria-label="First tab"><i class="stop"></i><i class="left"></i></button>
        <button class="page" aria-label="Previous tab"><i class="left"></i></button>
        <button class="page" aria-label="Next tab"><i class="right"></i></button>
        <button class="page" aria-label="Last tab"><i class="right"></i><i class="stop"></i></button>
        <button class="tab current">Model</button>
        <button class="tab">Layout1</button>
        <button class="tab">Layout2</button>
        <div class="scroll-h"><span class="thumb"></span><i class="right"></i></div>
      </div>
    </div>

    <div class="tools dimension">
      <span class="dock-grip"></span>
      <button aria-label="Linear"><svg><use href="#dimlin"/></svg></button>
      <button aria-label="Aligned"><svg><use href="#dimali"/></svg></button>
      <button aria-label="Arc length"><svg><use href="#dimarc"/></svg></button>
      <button aria-label="Ordinate"><svg><use href="#dimord"/></svg></button>
      <span class="hsep"></span>
      <button aria-label="Radius"><svg><use href="#dimrad"/></svg></button>
      <button aria-label="Jogged"><svg><use href="#dimjog"/></svg></button>
      <button aria-label="Diameter"><svg><use href="#dimdia"/></svg></button>
      <button aria-label="Angular"><svg><use href="#dimang"/></svg></button>
      <span class="hsep"></span>
      <button aria-label="Quick dimension"><svg><use href="#dimquick"/></svg></button>
      <button aria-label="Baseline"><svg><use href="#dimbase"/></svg></button>
      <button aria-label="Continue"><svg><use href="#dimcont"/></svg></button>
      <button aria-label="Dimension space"><svg><use href="#dimspace"/></svg></button>
      <button aria-label="Dimension break"><svg><use href="#dimbreak"/></svg></button>
      <span class="hsep"></span>
      <button aria-label="Tolerance"><svg><use href="#tolerance"/></svg></button>
      <button aria-label="Center mark"><svg><use href="#center"/></svg></button>
      <button aria-label="Inspection"><svg><use href="#inspect"/></svg></button>
      <button aria-label="Jogged linear"><svg><use href="#jogline"/></svg></button>
      <span class="hsep"></span>
      <button aria-label="Dimension edit"><svg><use href="#dimedit"/></svg></button>
      <button aria-label="Dimension text edit"><svg><use href="#dimtedit"/></svg></button>
      <button aria-label="Dimension update"><svg><use href="#dimupd"/></svg></button>
      <span class="hsep"></span>
      <button aria-label="Dimension style"><svg><use href="#dimstyle"/></svg></button>
    </div>
  </main>

  <!-- Command line -->
  <section class="command">
    <span class="command-grip"></span>
    <div class="command-lines">
      <p class="history">Specify opposite corner:<span class="spin"><i class="up"></i><i class="down"></i></span></p>
      <div class="prompt">
        <label for="cmd">Command:</label><input id="cmd" type="text">
        <div class="scroll-cmd"><i class="left"></i><span class="thumb"></span><i class="right"></i></div>
      </div>
    </div>
  </section>

  <!-- Status bar -->
  <footer class="status">
    <span class="coords">-8.9316, 2.5092, 0.0000</span>
    <div class="toggles">
      <button aria-label="Snap"><svg><use href="#snap"/></svg></button>
      <button aria-label="Grid"><svg><use href="#grid"/></svg></button>
      <button aria-label="Ortho"><svg><use href="#ortho"/></svg></button>
      <button aria-label="Polar"><svg><use href="#polar"/></svg></button>
      <button class="on" aria-label="Object snap"><svg><use href="#osnap"/></svg></button>
      <button class="on" aria-label="Object tracking"><svg><use href="#otrack"/></svg></button>
      <button class="on" aria-label="Dynamic UCS"><svg><use href="#ducs"/></svg></button>
      <button class="on" aria-label="Dynamic input"><svg><use href="#dyn"/></svg></button>
      <button class="on" aria-label="Lineweight"><svg><use href="#lwt"/></svg></button>
      <button aria-label="Quick properties"><svg><use href="#qp"/></svg></button>
    </div>
    <div class="status-right">
      <button aria-label="Model space"><svg><use href="#modelsp"/></svg></button>
      <button aria-label="Layouts"><svg><use href="#layoutsp"/></svg></button>
      <span class="gap"></span>
      <button aria-label="Pan"><svg><use href="#pan"/></svg></button>
      <button aria-label="Zoom"><svg><use href="#zoom"/></svg></button>
      <button aria-label="Steering wheel"><svg><use href="#wheel"/></svg></button>
      <button aria-label="ShowMotion"><svg><use href="#motion"/></svg></button>
      <span class="gap"></span>
      <button class="auto"><svg><use href="#anno"/></svg>1:1<span class="caret"></span></button>
      <button aria-label="Annotation visibility"><svg><use href="#annovis"/></svg></button>
      <button aria-label="Auto scale"><svg class="faded"><use href="#anno"/></svg></button>
      <span class="gap thin"></span>
      <button class="auto"><svg><use href="#gear"/></svg>AutoCAD Classic<span class="caret"></span></button>
      <button aria-label="Lock toolbars"><svg><use href="#lockgray"/></svg></button>
      <button class="pressed" aria-label="Tray"><svg><use href="#tray"/></svg></button>
      <button class="slim" aria-label="Status menu"><span class="caret"></span></button>
      <button class="clean" aria-label="Clean screen"><span class="screen"></span></button>
    </div>
  </footer>

  <!-- Windows taskbar -->
  <div class="taskbar">
    <button class="start" aria-label="Start">
      <svg viewBox="0 0 36 36"><circle cx="18" cy="18" r="17" fill="url(#orb)" stroke="#9cc4dc"/><path d="M9 11q4-3 8-1l-1 7q-4-2-8 1z" fill="#f0692c"/><path d="M19 11q4 2 9-1l-2 8q-4 2-8 0z" fill="#8cc63f"/><path d="M8 20q4-3 8-1l-1 7q-4-2-8 0z" fill="#53b7ef"/><path d="M17 20q4 2 9 0l-2 7q-4 2-8 0z" fill="#fcc72c"/><path d="M4 13q5-10 14-10t14 10q-14 3-28 0z" fill="#fff" opacity=".3"/></svg>
    </button>
    <button class="task dark" aria-label="AutoCAD">
      <svg viewBox="0 0 32 32"><path d="M2 11h28v20H2z" fill="#fff"/><text x="3" y="23" class="task-a">A</text><text x="21" y="18" class="task-year">20</text><text x="21" y="26" class="task-year">10</text></svg>
    </button>
    <button class="task dark" aria-label="SHAREit">
      <svg viewBox="0 0 32 32"><rect x="1" y="1" width="30" height="30" rx="5" fill="#2b93f3"/><circle cx="16" cy="17" r="8" fill="none" stroke="#fff" stroke-width="2"/><circle cx="16" cy="9" r="3" fill="#fff"/><circle cx="9" cy="21" r="3" fill="#fff"/><circle cx="23" cy="21" r="3" fill="#fff"/><path d="M4 13q3-8 10-9M28 20q-3 8-10 9" fill="none" stroke="#bfe0ff"/></svg>
    </button>
    <button class="task bare" aria-label="Home">
      <svg viewBox="0 0 32 32"><path d="M4 14l11 4v12L4 25z" fill="#e2e2e2"/><path d="M15 18l13-4v11l-13 5z" fill="#fff"/><path d="M2 13L9 5l15-3 6 11-15 5z" fill="#2f9e35"/><path d="M2 13L9 5l6 13z" fill="#5ccc54"/><path d="M10 2l4-1v7l-4 1z" fill="#f4f4f4"/><path d="M22 18l4-1v9l-4 1z" fill="#d9762b"/><path d="M17 20l4-1v6l-4 1z" fill="#4a9ad8"/></svg>
    </button>
    <button class="task light" aria-label="Explorer">
      <svg viewBox="0 0 32 32"><path d="M2 5l9-3 2 3h16v23H2z" fill="#f1d27a"/><path d="M4 8h24v18H4z" fill="#fdf0b0"/><path d="M2 12h27v17H2z" fill="#f5dd87"/><path d="M6 4h6v2H6z" fill="#4caf50"/><path d="M17 5h5v3h-5z" fill="#e57373"/><path d="M6 31v-8q0-3 3-3h14q3 0 3 3v8h-4v-6H10v6z" fill="#9fd6f2" stroke="#5ea9d2"/></svg>
    </button>
    <span class="pointer"></span>
    <div class="tray">
      <button aria-label="Show hidden icons"><i class="up"></i></button>
      <svg><use href="#cam"/></svg>
      <svg><use href="#flag"/></svg>
      <svg><use href="#power"/></svg>
      <svg><use href="#signal"/></svg>
      <svg><use href="#sound"/></svg>
      <button class="peek" aria-label="Show desktop"></button>
    </div>
  </div>
</div>

<!-- Corrupted column at the screen edge -->
<div class="edge">
  <svg aria-hidden="true"><filter id="noise" x="0" y="0" width="1" height="1"><feTurbulence type="fractalNoise" baseFrequency=".8" numOctaves="2"/><feColorMatrix values="2 0 0 0 -.7  0 2 0 0 -.8  0 0 2 0 -.6  0 0 0 0 1"/></filter><rect width="100%" height="100%" filter="url(#noise)"/></svg>
</div>
</div>

<!-- Recorder watermark -->
<div class="watermark">
  <svg viewBox="0 0 30 28" aria-hidden="true"><path d="M3 1h17q2 0 2 2v3l7-3v14l-7-4v4q0 2-2 2H3q-2 0-2-2V3q0-2 2-2z" fill="#fff"/><circle cx="11" cy="10" r="5" fill="none" stroke="#888" stroke-width="2"/><path d="M9 25q2-4 7-2" fill="none" stroke="#fff" stroke-width="1.500"/></svg>
  <p><small>Apowersoft</small>Screen Recorder</p>
</div>

<!-- Recorder panel -->
<div class="recorder">
  <div class="recorder-controls">
    <button class="stop-rec" aria-label="Stop"><i></i></button>
    <button class="pause-rec" aria-label="Pause"><i></i><i></i></button>
  </div>
  <div class="time"><span>Recording...</span><strong>00:00:05</strong></div>
  <span class="level"></span>
  <svg class="volume" viewBox="0 0 64 20" aria-label="Volume"><path d="M2 13L61 1v12z" fill="#e3f0f8"/><path d="M1 13.500h61" stroke="#1485bb" stroke-width="2.500"/><path d="M62 9v9" stroke="#1485bb" stroke-width="2"/></svg>
  <button class="rec-tool" aria-label="Webcam"><svg viewBox="0 0 26 28"><circle cx="12" cy="12" r="9.500" fill="#fff" stroke="#444"/><circle cx="12" cy="12" r="4.500" fill="#222"/><circle cx="10" cy="10" r="1.500" fill="#aaa"/><path d="M5 23q7 3 12 1" fill="none" stroke="#333" stroke-width="1.300"/><path d="M22 20v6M19 23h6" stroke="#222" stroke-width="1.300"/></svg></button>
  <button class="rec-tool" aria-label="Annotate"><svg viewBox="0 0 26 28"><path d="M2 25l2-7L17 5l5 5L9 23z" fill="#333"/><path d="M18 4l2-2 5 5-2 2z" fill="#fff" stroke="#333"/><path d="M4 20l3 3-4 1z" fill="#fff"/></svg></button>
</div>

</body>
</html>
```
FILE: styles.css
```css
/* Reset */
* {
  margin: 0;
  padding: 0;
  box-sizing: border-box;
}
body {
  height: 100vh;
  overflow: hidden;
  font-family: "Open Sans", "Noto Sans", sans-serif;
  font-size: 11px;
  color: #222;
  background: #6a6a6a;
}
button {
  font: inherit;
  color: inherit;
  background: none;
  border: 0;
}
svg {
  width: 16px;
  height: 16px;
  flex: none;
}
.gradients {
  position: absolute;
  width: 0;
  height: 0;
}
.sprite {
  display: none;
}
.desktop {
  display: flex;
  height: 100vh;
}
.app {
  flex: 1;
  min-width: 0;
  display: flex;
  flex-direction: column;
}

/* Small shared pieces */
.caret {
  width: 0;
  border: 4px solid transparent;
  border-top: 4px solid #111;
  border-bottom: 0;
}
.faded {
  opacity: 0.5;
}
.tb, .drop {
  display: flex;
  align-items: center;
  justify-content: center;
  width: 22px;
  height: 100%;
  flex: none;
}
.drop {
  width: 12px;
}
.narrow {
  width: 8px;
}
.drop .caret {
  border-width: 3px 3px 0;
}
i.left, i.right, i.up, i.down {
  width: 0;
  height: 0;
  border: 4px solid transparent;
}
i.left {
  border-right-color: #444;
  border-left: 0;
}
i.right {
  border-left-color: #444;
  border-right: 0;
}
i.up {
  border-bottom-color: #444;
  border-top: 0;
}
i.down {
  border-top-color: #444;
  border-bottom: 0;
}
.thumb {
  background: linear-gradient(#fafafa, #ccc);
  border: 1px solid #888;
  border-radius: 2px;
}

/* Header */
.header {
  display: grid;
  grid-template-columns: 39px 1fr;
  grid-template-rows: 23px 20px;
  background: linear-gradient(#9c9c9c, #5b5b5b) bottom / 100% 20px no-repeat #555;
}
.app-button {
  grid-row: 1 / 3;
  height: 39px;
  display: flex;
  align-items: center;
  gap: 1px;
  border: 1px solid #444;
  background: linear-gradient(#c6c6c6, #8b8b8b);
}
.app-logo {
  width: 27px;
  height: 34px;
}
.app-button .caret {
  border-width: 4px 3px 0;
}
.logo-a {
  font: bold 32px "Liberation Sans", sans-serif;
  fill: url(#red);
  filter: drop-shadow(1px 1px 0 #7c1010);
}
.titlebar {
  display: flex;
  border-bottom: 1px solid #50505e;
  background: linear-gradient(100deg, #8c93c6, #a3a4d2 20%, #9a9bcb 32%, #b7b0d6 45%, #a6a0cb 60%, #b9b4d8 75%, #9fa6da);
}
.quick-access {
  display: flex;
  align-items: center;
  padding-left: 3px;
  width: 164px;
  background: linear-gradient(#a9a9a9, #8f8f8f);
  border: solid #555;
  border-width: 1px 1px 0 0;
}
.title {
  flex: 1;
  display: flex;
  justify-content: center;
  align-items: center;
  gap: 18px;
  padding-left: 13px;
}
.info-center {
  display: flex;
  align-items: center;
  width: 302px;
  background: linear-gradient(#b4b4b4, #929292);
  border-left: 1px solid #555;
}
.expand {
  width: 8px;
  height: 8px;
  background: linear-gradient(#111, #111) center / 4px 6px no-repeat;
  clip-path: polygon(20% 0, 80% 50%, 20% 100%);
}
.search {
  flex: 1;
  min-width: 0;
  height: 20px;
  padding: 3px 0 0 2px;
  font: italic 10px "Open Sans", sans-serif;
  border: 0;
  background: #f4f4f4;
}
.search::placeholder {
  color: #777;
}
.window-buttons {
  display: flex;
  width: 94px;
  height: 17px;
  margin-left: 14px;
  border: solid #777ba8;
  border-width: 0 0 1px 1px;
  border-radius: 0 0 0 5px;
}
.window-buttons button {
  width: 26px;
  border-right: 1px solid #8d91bd;
}
.window-buttons svg, .doc-buttons svg {
  width: 14px;
  height: 14px;
}
.window-buttons .wide {
  flex: 1;
  border: 0;
}
.menu {
  display: flex;
  align-items: center;
  gap: 21px;
  padding: 0 0 2px 14px;
}
.menu a {
  color: #f2f2f2;
  text-decoration: none;
}
.doc-buttons {
  display: flex;
  gap: 2px;
  margin-left: auto;
}

/* Toolbars */
.toolbars {
  display: flex;
  flex-direction: column;
  gap: 4px;
  padding: 0 1px 6px;
  background: #6a6a6a;
  border-bottom: 1px solid #4a4a4a;
}
.bar {
  display: flex;
  height: 21px;
}
.grip {
  width: 7px;
  flex: none;
  background: repeating-linear-gradient(#4a4a4a 0 1px, #777 1px 3px) center / 4px 15px no-repeat;
}
.grip.wide {
  width: 10px;
}
.panel {
  display: flex;
  background: linear-gradient(#f4f4f4, #e6e6e6);
  box-shadow: 0 1px 0 #3c3c3c;
}
.sep {
  width: 1px;
  margin: 2px 1px 2px 2px;
  background: #888;
}
.split {
  width: 28px;
  padding-left: 4px;
  border-left: 2px solid #aaa;
}
select {
  appearance: none;
  font: 11px "Open Sans", sans-serif;
  color: #222;
  border: 0;
}
.combo {
  display: flex;
  align-items: center;
  height: 20px;
  border: 1px solid #8a8a8a;
  border-radius: 2px;
  background: linear-gradient(#fafafa, #dcdcdc);
}
.combo select {
  flex: 1;
  min-width: 0;
  height: 18px;
}
select.combo, .combo select {
  background-image: conic-gradient(from -45deg at 50% 100%, #111 90deg, transparent 0), linear-gradient(#fafafa, #dcdcdc);
  background-position: right 4px center, center;
  background-size: 8px 4px, 100% 100%;
  background-repeat: no-repeat;
}
.style {
  width: 112px;
  padding-left: 15px;
}
.flush {
  padding-left: 2px;
}
.workspace-select {
  width: 164px;
  padding-left: 7px;
}
.layer {
  width: 280px;
  gap: 2px;
  padding-left: 1px;
}
.layer svg {
  width: 14px;
  height: 14px;
}
.swatch {
  width: 10px;
  height: 10px;
  border: 1px solid #222;
  background: #fff;
}
.color {
  width: 140px;
  gap: 1px;
  padding-left: 4px;
}
.linetype {
  width: 150px;
}
.lineweight {
  width: 119px;
}
.linetype, .lineweight {
  gap: 4px;
  padding-left: 3px;
}
.rule {
  height: 1px;
  width: 56px;
  background: #333;
}
.lineweight .rule {
  width: 33px;
}
.double {
  width: 5px;
  border: solid #999;
  border-width: 0 1px;
}
.plot {
  width: 112px;
  padding-left: 8px;
}
.plot:disabled {
  color: #888;
  background-image: conic-gradient(from -45deg at 50% 100%, #aaa 90deg, transparent 0), linear-gradient(#f6f6f6, #f0f0f0);
  opacity: 1;
}

/* Work area */
.work {
  flex: 1;
  min-height: 0;
  display: flex;
  background: #6a6a6a;
}
.dock {
  display: flex;
  align-items: flex-start;
  gap: 3px;
  width: 54px;
  padding-left: 1px;
}
.tools {
  display: flex;
  flex-direction: column;
  background: #f0f0f0;
  border: 1px solid #444;
  border-top: 0;
}
.tools button {
  flex: 1;
  display: flex;
  align-items: center;
  justify-content: center;
}
.dock-grip {
  height: 6px;
  flex: none;
  background: repeating-linear-gradient(#444 0 1px, #777 1px 3px);
}
.draw {
  width: 23px;
  height: 398px;
}
.modify {
  width: 23px;
  height: 357px;
}
.dimension {
  width: 20px;
  height: 468px;
  margin-left: 4px;
  border-right: 0;
}
.hsep {
  height: 1px;
  margin: 1px 2px 2px;
  background: #999;
}
.drawing-window {
  flex: 1;
  min-width: 0;
  display: flex;
  flex-direction: column;
  margin-bottom: 3px;
  border-left: 1px solid #aaa;
  border-right: 1px solid #ddd;
}
.view {
  flex: 1;
  min-height: 0;
  display: flex;
}
.canvas {
  position: relative;
  flex: 1;
  overflow: hidden;
  background: #000;
}
.scroll-v {
  display: flex;
  flex-direction: column;
  align-items: center;
  width: 17px;
  padding: 6px 0;
  background: #f0f0f0;
}
.scroll-v .thumb {
  width: 14px;
  height: 14px;
  margin: 124px 0 auto;
}
.arrow {
  border: 4px solid transparent;
}
.arrow.up {
  border-top: 0;
  border-bottom-color: #333;
}
.arrow.down {
  border-bottom: 0;
  border-top-color: #333;
}

/* Drawing content */
.heading {
  position: absolute;
  left: 42px;
  top: 30px;
  padding: 0 3px 0 1px;
  font: bold 49px/52px "Liberation Sans", Arial, sans-serif;
  color: #fff;
  white-space: nowrap;
  border-bottom: 1px solid #fff;
}
.ruler {
  position: absolute;
  left: 0;
  top: 0;
  width: 780px;
  height: 512px;
}
.ticks {
  fill: none;
  stroke: #fff;
  stroke-width: 3;
  stroke-linejoin: round;
  stroke-linecap: round;
}
.small, .large {
  font: 25px "Liberation Sans", Arial, sans-serif;
  fill: #fff;
  text-anchor: middle;
}
.large {
  font-size: 48px;
}
.picked {
  font-family: Roboto, sans-serif;
  fill: url(#picked);
}
.ucs {
  fill: none;
  stroke: #ccc;
  font: 17px "Liberation Sans", Arial, sans-serif;
  text-anchor: middle;
}
.ucs text {
  fill: #ccc;
  stroke: none;
}
.sheet {
  position: absolute;
  left: 787px;
  top: 17px;
  width: 340px;
  height: 439px;
  padding: 22px 40px 0 40px;
  background: #fff;
  font-family: "Liberation Serif", "Times New Roman", serif;
}
.sheet h2 {
  margin-bottom: 6px;
  font-size: 20px;
  font-weight: normal;
  line-height: 23px;
  text-align: center;
}
.sheet table {
  width: 246px;
  margin: 0 auto;
  table-layout: fixed;
  border-collapse: collapse;
  border: 1px solid #999;
  border-right-color: #ddd;
}
.sheet th, .sheet td {
  height: 23px;
  font-size: 20px;
  font-weight: bold;
  line-height: 22px;
  text-align: center;
  color: #1010b4;
  border-bottom: 1px solid #888;
}
.sheet th:nth-child(2), .sheet td:nth-child(2) {
  color: #18dc18;
  border-left: 1px solid #ddd;
  border-right: 1px solid #888;
}
.sheet th:nth-child(3), .sheet td:nth-child(3) {
  color: #dc1414;
}
.sheet .faint td {
  border-bottom-color: #e2e2e2;
}
.sheet .no-line td {
  border-bottom-color: #fff;
}

/* Layout tabs */
.tabs {
  display: flex;
  height: 17px;
  background: #f0f0f0;
  border-bottom: 1px solid #fff;
}
.page {
  display: flex;
  align-items: center;
  justify-content: center;
  width: 14px;
  border-right: 1px solid #bbb;
}
.stop {
  width: 1px;
  height: 8px;
  background: #444;
}
.tab {
  position: relative;
  padding: 0 8px;
  font: 10px "Noto Sans", sans-serif;
}
.tab::after {
  content: "";
  position: absolute;
  right: 0;
  top: 2px;
  height: 14px;
  border-right: 1px solid #333;
  transform: skewX(-25deg);
}
.tab.current {
  padding: 0 9px 0 11px;
  color: #fff;
  background: #000;
  clip-path: polygon(0 0, 100% 0, calc(100% - 7px) 100%, 7px 100%);
}
.scroll-h {
  flex: 1;
  display: flex;
  align-items: center;
  justify-content: flex-end;
  padding-right: 22px;
}
.scroll-h .thumb {
  width: 14px;
  height: 14px;
  margin-right: 302px;
}

/* Command line */
.command {
  display: flex;
  height: 34px;
  background: #a5a5a5;
  border: solid #444;
  border-width: 1px 0;
}
.command-grip {
  width: 15px;
  background: repeating-linear-gradient(90deg, #444 0 1px, transparent 1px 3px) 2px 4px / 10px 4px no-repeat;
}
.command-lines {
  flex: 1;
  background: #fff;
  font: 12px/15px "Liberation Mono", "Courier New", monospace;
}
.history, .prompt {
  display: flex;
  height: 16px;
  padding-left: 1px;
}
.history {
  border-bottom: 1px solid #777;
}
.prompt {
  padding-top: 1px;
}
.spin {
  display: flex;
  flex-direction: column;
  align-items: center;
  justify-content: space-between;
  width: 10px;
  margin-left: auto;
  padding: 2px 0;
  background: #eee;
}
.spin .up, .spin .down {
  border-left-width: 3px;
  border-right-width: 3px;
}
.prompt input {
  flex: 1;
  font: inherit;
  border: 0;
  outline: 0;
}
.scroll-cmd {
  display: flex;
  align-items: center;
  justify-content: space-between;
  width: 66px;
  padding: 0 7px;
  margin-right: 9px;
  background: #eee;
}
.scroll-cmd .thumb {
  width: 14px;
  height: 14px;
  margin-right: 10px;
}

/* Status bar */
.status {
  display: flex;
  height: 20px;
  background: linear-gradient(#929292, #7d7d7d);
  border-bottom: 1px solid #555;
}
.coords {
  width: 165px;
  padding-left: 12px;
  line-height: 20px;
  color: #a6a6a6;
  font-family: "Liberation Sans", Arial, sans-serif;
  font-size: 10px;
}
.toggles, .status-right {
  display: flex;
}
.toggles {
  width: 207px;
}
.status-right {
  margin-left: auto;
}
.status button {
  display: flex;
  align-items: center;
  justify-content: center;
  width: 21px;
  border-right: 1px solid #666;
  background: linear-gradient(#c0c0c0, #949494);
}
.toggles button {
  flex: 1;
}
.status svg {
  width: 15px;
  height: 15px;
}
.status .on {
  background: linear-gradient(#dff2f8, #94c6d6);
}
.status .auto {
  width: auto;
  gap: 2px;
  padding: 0 2px;
  font-family: "Liberation Sans", Arial, sans-serif;
  font-size: 10px;
}
.status .auto .caret {
  border-width: 4px 3px 0;
}
.status .pressed {
  width: 31px;
  background: #858585;
  border: 1px solid #555;
}
.status .slim {
  width: 11px;
}
.status .slim .caret {
  border-width: 3px 3px 0;
}
.status .clean {
  width: 15px;
  justify-content: flex-end;
  border: 0;
}
.screen {
  width: 13px;
  height: 12px;
  border: solid #444;
  border-width: 3px 0 1px 1px;
  background: #fff;
}
.gap {
  width: 11px;
  background: #6c6c6c;
}
.gap.thin {
  width: 6px;
}

/* Taskbar */
.taskbar {
  position: relative;
  display: flex;
  align-items: center;
  gap: 3px;
  height: 37px;
  overflow: hidden;
  background:
    radial-gradient(ellipse 45px 14px at 895px 4px, #20232e, transparent),
    linear-gradient(26deg, transparent 44%, #1c1f29 49% 51%, transparent 56%) 740px 0 / 90px 37px no-repeat,
    radial-gradient(ellipse 90px 30px at 840px 36px, #2b2f42, transparent),
    linear-gradient(90deg, #32343d, #5a5d6c 16%, #646a80 30%, #74748a 50%, #6b6c84 58%, #4f5369 66%, #6a6e8a 82%, #555a6c 92%, #555865);
}
.start {
  width: 53px;
  height: 37px;
}
.start svg {
  width: 36px;
  height: 36px;
}
.task {
  width: 55px;
  height: 36px;
  border: 1px solid #a5a8b2;
  border-radius: 2px;
  background: linear-gradient(135deg, #8a8d96, #60636e);
}
.task svg {
  width: 31px;
  height: 31px;
  margin-top: 1px;
}
.task.dark {
  background: linear-gradient(135deg, #8a8d96, #2f323a 60%, #555865);
}
.task.bare {
  border-color: transparent;
  background: none;
}
.task.light {
  background: linear-gradient(135deg, #a3a5ae, #80828e);
}
.task-a {
  font: bold 24px "Liberation Sans", sans-serif;
  fill: #cf1f1f;
}
.task-year {
  font: bold 7px "Liberation Sans", sans-serif;
  fill: #c22;
}
.pointer {
  position: absolute;
  left: 536px;
  top: 30px;
  width: 15px;
  height: 15px;
  border-radius: 50%;
  background: #ef1584;
}
.tray {
  display: flex;
  align-items: center;
  gap: 9px;
  margin-left: auto;
}
.tray svg {
  width: 15px;
  height: 15px;
}
.tray .up {
  display: block;
  border-bottom-color: #fff;
}
.peek {
  width: 7px;
  height: 37px;
  border-left: 1px solid #999;
}

/* Screen edge */
.edge {
  display: flex;
  flex-direction: column;
  width: 5px;
  padding-top: 232px;
  background: repeating-linear-gradient(#777 0 2px, #888 2px 3px);
}
.edge svg {
  width: 5px;
  flex: 1;
}

/* Watermark */
.watermark {
  position: absolute;
  top: 17px;
  right: 13px;
  display: flex;
  gap: 4px;
  opacity: 0.8;
  pointer-events: none;
}
.watermark svg {
  width: 30px;
  height: 28px;
}
.watermark p {
  font: 600 15px/15px Inter, sans-serif;
  color: #fff;
}
.watermark small {
  display: block;
  font-size: 11px;
  line-height: 10px;
}

/* Recorder */
.recorder {
  position: absolute;
  left: 413px;
  bottom: 59px;
  display: flex;
  align-items: center;
  width: 462px;
  height: 51px;
  border-radius: 4px;
  background: #fff;
  box-shadow: 0 0 4px rgba(0, 0, 0, 0.6);
}
.recorder-controls {
  display: flex;
  align-items: center;
  gap: 13px;
  width: 116px;
  height: 51px;
  padding-left: 15px;
  border-radius: 4px 10px 10px 4px / 4px 26px 26px 4px;
  background: repeating-linear-gradient(90deg, #555 0 1px, #333 1px 2px) 3px 5px / 5px 41px no-repeat #333;
}
.recorder-controls button {
  display: flex;
  align-items: center;
  justify-content: center;
  gap: 4px;
  width: 36px;
  height: 36px;
  border: 1px solid #eee;
  border-radius: 50%;
}
.recorder-controls .stop-rec {
  border-color: #e05a5a;
}
.stop-rec i {
  width: 15px;
  height: 15px;
  border-radius: 2px;
  background: #f46a6a;
}
.pause-rec i {
  width: 3px;
  height: 16px;
  background: #fff;
}
.time {
  display: flex;
  flex-direction: column;
  width: 112px;
  height: 41px;
  margin-left: 26px;
  padding: 1px 7px;
  border-radius: 4px;
  background: #f0f0f0;
}
.time span {
  font-size: 12px;
  line-height: 16px;
}
.time strong {
  font: bold 17px/24px "Liberation Sans", Arial, sans-serif;
  color: #000;
}
.level {
  width: 18px;
  height: 1px;
  margin: 20px 16px 0 14px;
  background: repeating-linear-gradient(90deg, #1485bb 0 3px, transparent 3px 4px);
}
.volume {
  width: 64px;
  height: 20px;
}
.rec-tool {
  width: 26px;
  height: 28px;
  margin-left: 12px;
}
.rec-tool svg {
  width: 26px;
  height: 28px;
}
```
